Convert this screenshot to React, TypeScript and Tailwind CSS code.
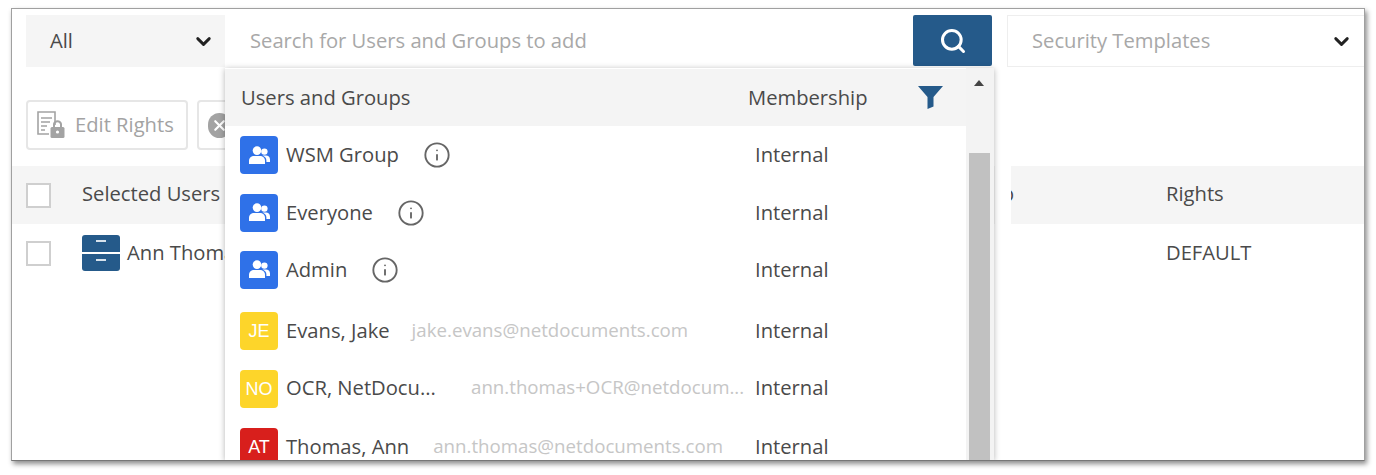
import { ChevronDown, Info, Search, X } from "lucide-react";

type Row = {
  name: string;
  rowClass: string;
  textClass: string;
  nameClass: string;
  avatar?: string;
  avatarClass?: string;
  email?: string;
  emailClass?: string;
};

const rows: Row[] = [
  { name: "WSM Group", rowClass: "h-[58px]", textClass: "mb-[2px]", nameClass: "" },
  { name: "Everyone", rowClass: "h-[57px]", textClass: "", nameClass: "" },
  { name: "Admin", rowClass: "h-[57px]", textClass: "", nameClass: "" },
  {
    name: "Evans, Jake",
    rowClass: "mt-[3px] h-[60px]",
    textClass: "mb-[2px]",
    nameClass: "",
    avatar: "JE",
    avatarClass: "bg-[#fdd52a]",
    email: "jake.evans@netdocuments.com",
    emailClass: "ml-[22px]",
  },
  {
    name: "OCR, NetDocu...",
    rowClass: "h-[56px]",
    textClass: "mb-[3px]",
    nameClass: "w-[151px]",
    avatar: "NO",
    avatarClass: "bg-[#fdd52a]",
    email: "ann.thomas+OCR@netdocum...",
    emailClass: "ml-[34px]",
  },
  {
    name: "Thomas, Ann",
    rowClass: "h-[60px]",
    textClass: "mb-[2px]",
    nameClass: "",
    avatar: "AT",
    avatarClass: "bg-[#d81f1c]",
    email: "ann.thomas@netdocuments.com",
    emailClass: "ml-6",
  },
];

function EditRightsIcon() {
  return (
    <svg width="30" height="30" viewBox="0 0 30 30" fill="none" stroke="#a3a3a3" strokeWidth="1.6">
      <path d="M19 15V2H2v22h11" />
      <path d="M5 8h11M5 12h9M5 16h6M5 20h4" />
      <rect x="14.5" y="17" width="14" height="11" rx="1.5" fill="#a3a3a3" stroke="none" />
      <path d="M18 17v-3a3.6 3.6 0 0 1 7 0v3" strokeWidth="2" />
      <circle cx="21.5" cy="22" r="1.6" fill="#fff" stroke="none" />
    </svg>
  );
}

function CabinetIcon() {
  return (
    <svg width="38" height="36" viewBox="0 0 38 36">
      <rect width="38" height="36" rx="3" fill="#255a8a" />
      <rect y="17" width="38" height="2" fill="#fff" />
      <rect x="14" y="5" width="10" height="2" fill="#d7e2ec" />
      <rect x="14" y="24" width="10" height="2" fill="#d7e2ec" />
    </svg>
  );
}

function FilterIcon() {
  return (
    <svg width="25" height="23" viewBox="0 0 25 23">
      <path d="M0 0h25l-9.5 11v9.5L9.5 23V11z" fill="#255a8a" />
    </svg>
  );
}

function GroupIcon() {
  return (
    <svg width="21" height="19" viewBox="0 0 21 19" fill="#fff">
      <circle cx="8" cy="4.6" r="4.3" />
      <path d="M0 18v-3.2C0 11.8 2.4 10 5 10h6c2.6 0 5 1.8 5 4.8V18z" />
      <circle cx="15.4" cy="5.6" r="3.2" />
      <path d="M13.6 9.6h3.4c2.2 0 4 1.5 4 3.8V16h-3.6v-1.6c0-2-1.400-3.700-3.800-4.800z" />
    </svg>
  );
}

export default function App() {
  return (
    <div className="h-[475px] w-[1376px] overflow-hidden bg-white pl-[11px] pt-2 font-['Open_Sans',sans-serif] text-[20.2px] text-[#4a4a4a]">
      <div className="relative h-[453px] w-[1354px] overflow-hidden border border-[#a0a0a0] border-b-[#777] bg-white shadow-[2px_3px_5px_rgba(0,0,0,0.45)]">
        <div className="ml-[14px] mt-1.5 flex h-[52px]">
          <div className="flex w-[199px] items-center justify-between bg-[#f5f5f5] pl-6 pr-2.5">
            <span className="mb-[2px]">All</span>
            <ChevronDown size={23} strokeWidth={3} color="#222" />
          </div>
          <div className="ml-px flex w-[687px] items-center pb-[2px] pl-6 text-[#a8a8a8]">
            Search for Users and Groups to add
          </div>
          <button className="flex h-[51px] w-[79px] items-center justify-center rounded-[2px] bg-[#255a8a]">
            <Search size={28} strokeWidth={2.6} color="#fff" />
          </button>
          <div className="ml-[15px] flex flex-1 items-center justify-between border border-r-0 border-[#eeeeee] pl-6 pr-[11px] text-[#a8a8a8]">
            <span className="mb-[2px]">Security Templates</span>
            <ChevronDown size={23} strokeWidth={3} color="#222" />
          </div>
        </div>

        <div className="ml-[14px] mt-[33px] flex h-[50px] gap-[9px]">
          <button className="flex w-[162px] items-center gap-[9px] rounded border-2 border-[#e6e6e6] pl-2 text-[#a3a3a3]">
            <EditRightsIcon />
            <span className="mb-[2px]">Edit Rights</span>
          </button>
          <button className="flex w-[120px] items-center gap-2 rounded border-2 border-[#e6e6e6] pl-[9px] text-[#a3a3a3]">
            <span className="flex size-[25px] items-center justify-center rounded-full bg-[#a3a3a3]">
              <X size={17} strokeWidth={3} color="#fff" />
            </span>
            <span>Remove</span>
          </button>
        </div>

        <div className="mt-4 flex h-[58px] items-center bg-[#f5f5f5] pl-[14px]">
          <span className="size-[25px] border-2 border-[#cfcfcf] bg-white" />
          <span className="mb-1 ml-[31px] w-[910px]">Selected Users</span>
          <span className="mb-1 w-[22px] overflow-hidden text-right">p</span>
          <span className="mb-1 ml-[152px]">Rights</span>
        </div>

        <div className="mt-[11px] flex h-[36px] items-center pl-[14px]">
          <span className="size-[25px] border-2 border-[#cfcfcf] bg-white" />
          <span className="ml-[31px]">
            <CabinetIcon />
          </span>
          <span className="mb-[2px] ml-[7px] w-[1008px]">Ann Thomas</span>
          <span className="mb-[2px] ml-[31px]">DEFAULT</span>
        </div>

        {/* white gap to the right of the dropdown, cuts the hidden column title */}
        <div className="absolute left-[983px] top-[157px] h-[58px] w-[16px] bg-white" />

        {/* dropdown sits over the table */}
        <div className="absolute bottom-0 left-[213px] top-[59px] flex w-[769px] bg-white shadow-[0_1px_6px_rgba(0,0,0,0.3)]">
          <div className="w-[741px]">
            <div className="mt-px flex h-[57px] items-center bg-[#f4f4f4] pl-4">
              <span className="w-[507px]">Users and Groups</span>
              <span className="w-[170px]">Membership</span>
              <FilterIcon />
            </div>
            <div>
              {rows.map((row) => (
                <div key={row.name} className={`flex items-center pl-[15px] ${row.rowClass}`}>
                  <div className="flex w-[515px] items-center">
                    {row.avatar ? (
                      <span className={`flex size-[38px] shrink-0 items-center justify-center rounded-sm font-['Liberation_Sans',sans-serif] text-[18px] text-white ${row.avatarClass}`}>
                        {row.avatar}
                      </span>
                    ) : (
                      <span className="flex size-[38px] shrink-0 items-center justify-center rounded-sm bg-[#2f71e8]">
                        <GroupIcon />
                      </span>
                    )}
                    <span className={`ml-2 whitespace-nowrap ${row.nameClass} ${row.textClass}`}>{row.name}</span>
                    {row.email ? (
                      <span className={`whitespace-nowrap text-[18.7px] text-[#c6c6c6] ${row.emailClass} ${row.textClass}`}>{row.email}</span>
                    ) : (
                      <Info size={28} strokeWidth={1.6} color="#666" className="ml-6" />
                    )}
                  </div>
                  <span className={row.textClass}>Internal</span>
                </div>
              ))}
            </div>
          </div>
          <div className="flex w-[28px] flex-col bg-[#f3f3f3] pl-[3px] pr-1">
            <div className="flex h-[85px] justify-center pr-[2px] pt-[12px]">
              <span className="h-0 w-0 border-x-[5px] border-b-[6px] border-x-transparent border-b-[#444]" />
            </div>
            <div className="flex-1 bg-[#c1c1c1]" />
          </div>
        </div>
      </div>
    </div>
  );
}
